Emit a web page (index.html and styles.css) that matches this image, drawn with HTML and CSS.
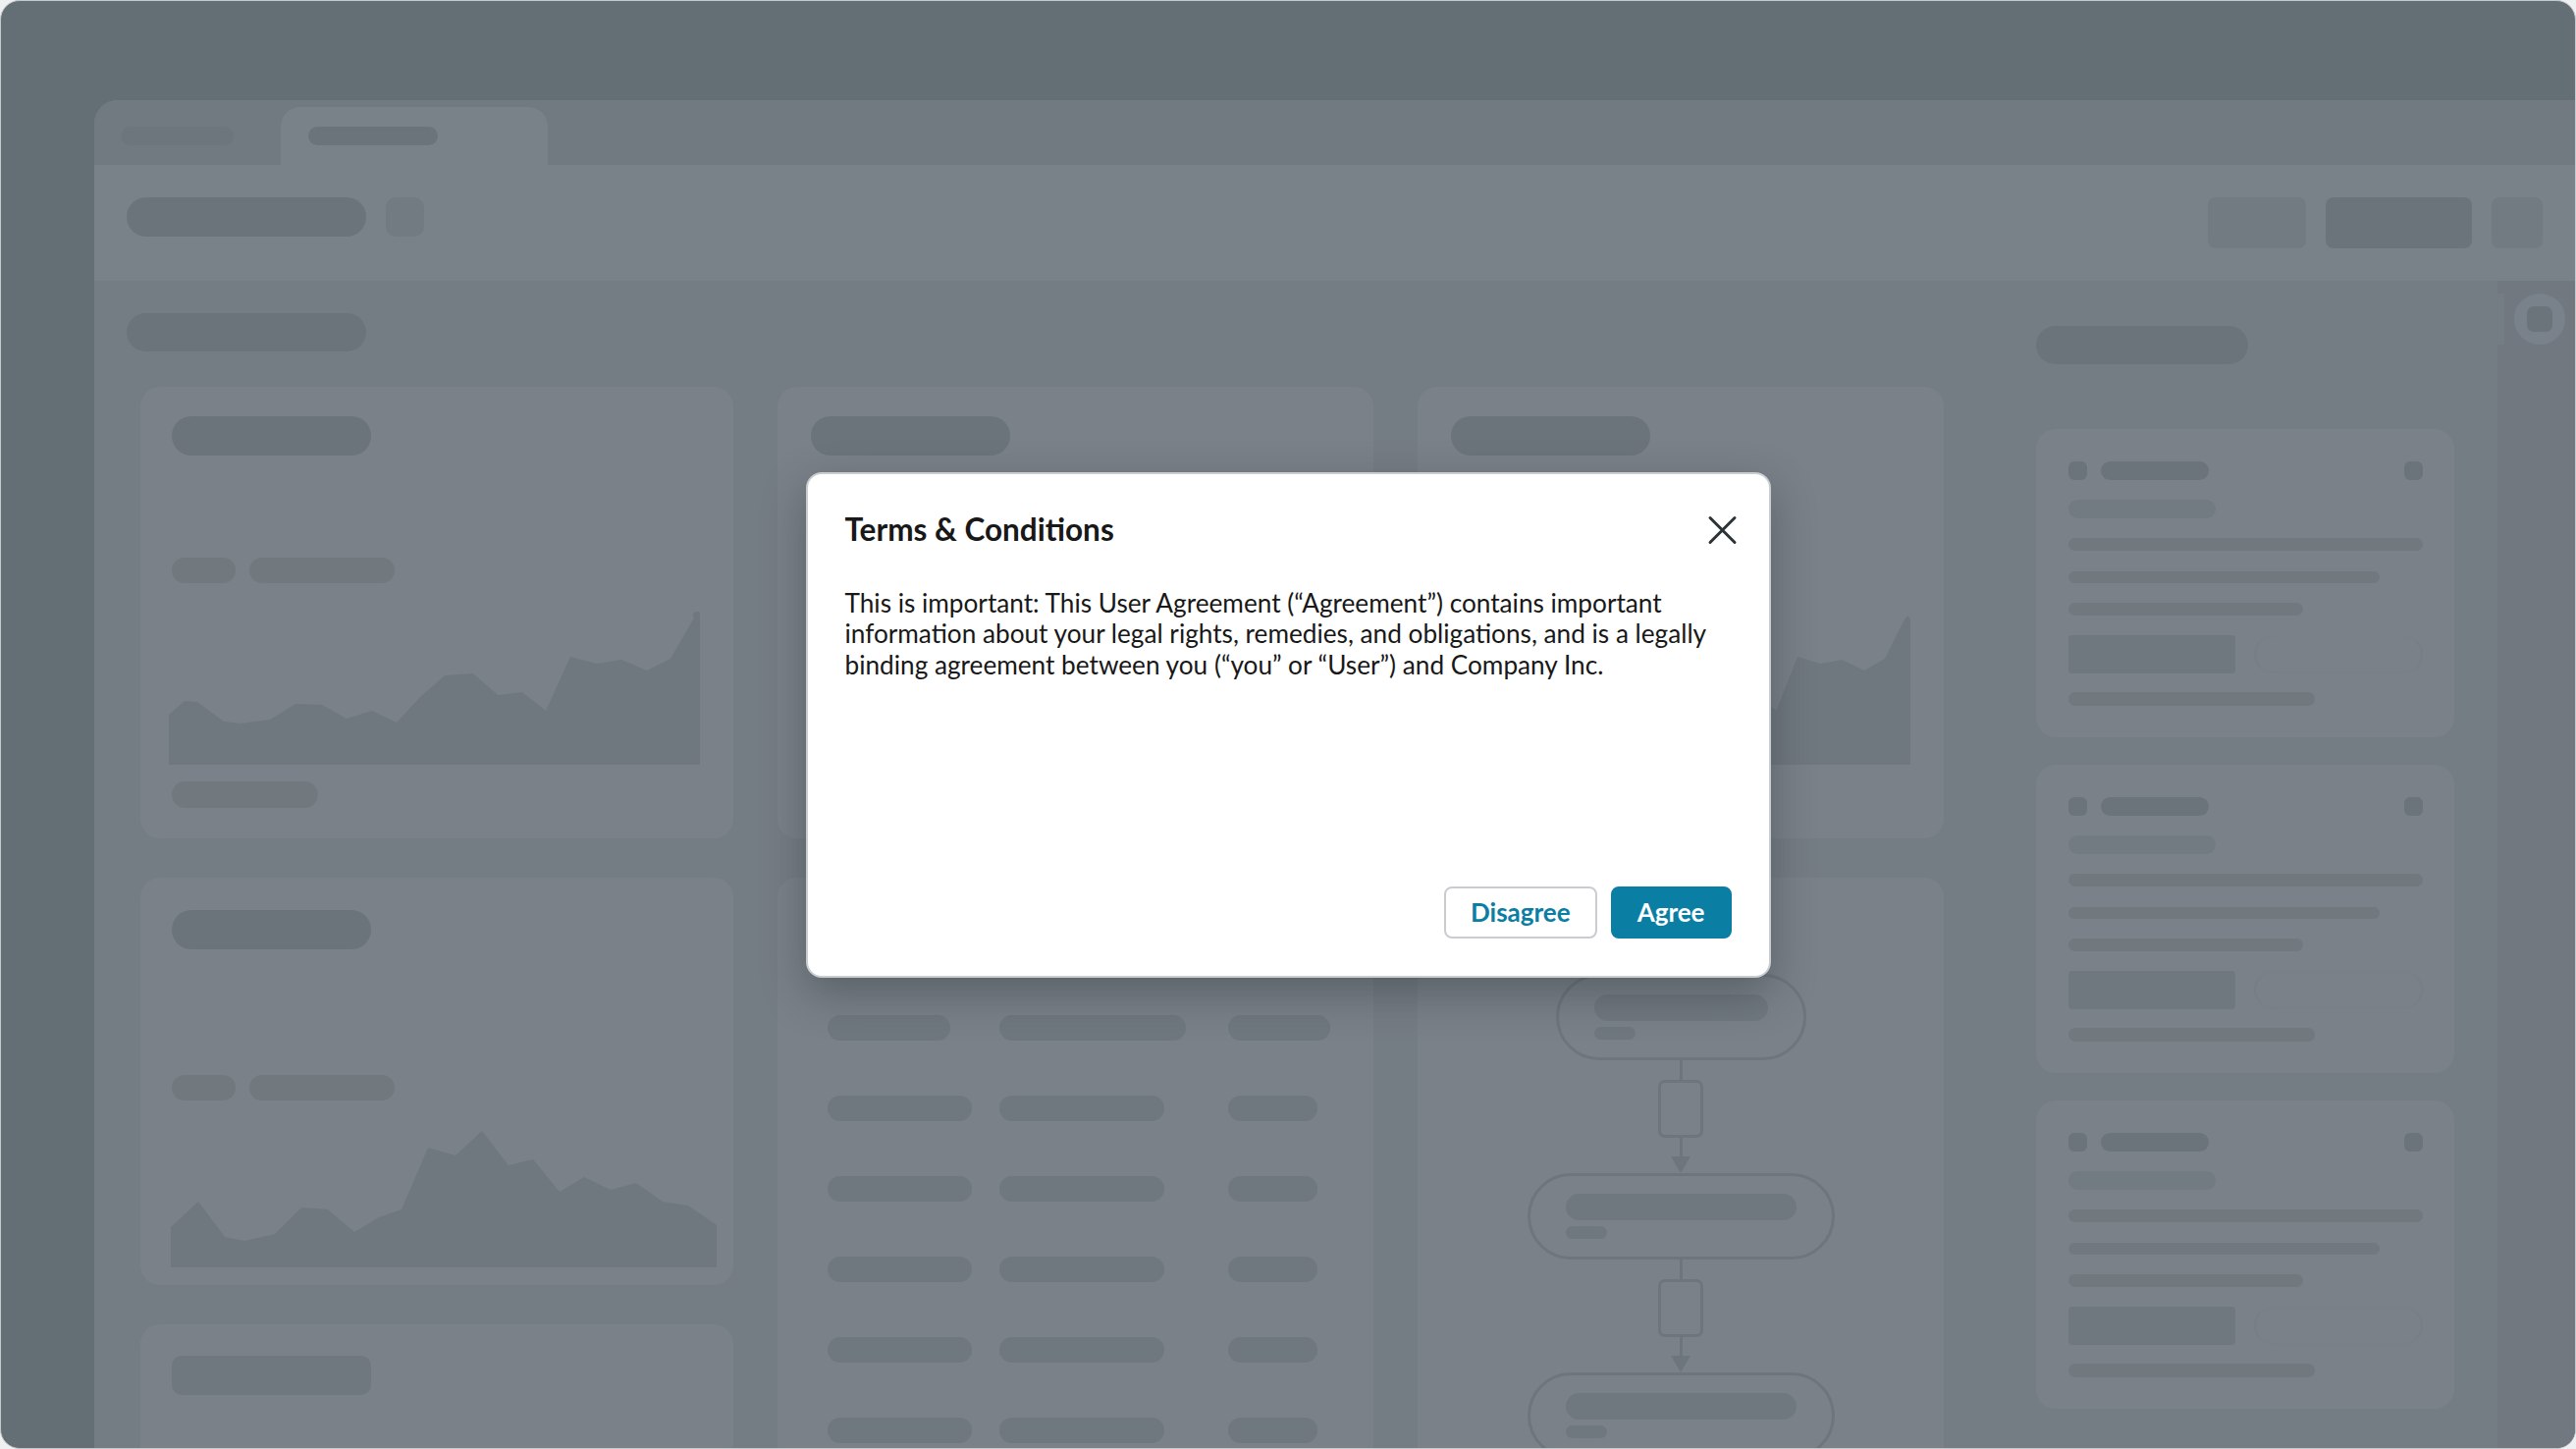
FILE: index.html
```html
<!DOCTYPE html>
<html lang="en">
<head>
    <meta charset="UTF-8">
    <meta name="viewport" content="width=device-width, initial-scale=1.0">
    <title>Terms &amp; Conditions</title>
    <link rel="stylesheet" href="styles.css">
</head>
<body>
<div class="frame">
    <div class="app">
        <div class="tabbar">
            <div class="tab tab-first"><span class="sk"></span></div>
            <div class="tab tab-active"><span class="sk"></span></div>
        </div>

        <div class="header">
            <div class="header-left">
                <span class="sk head-title"></span>
                <span class="sk head-icon"></span>
            </div>
            <div class="header-right">
                <span class="sk hbtn hbtn-a"></span>
                <span class="sk hbtn hbtn-b"></span>
                <span class="sk hbtn hbtn-c"></span>
            </div>
        </div>

        <div class="workspace">
            <div class="main">
                <div class="left">
                    <span class="sk section-title"></span>
                    <div class="grid">
                        <!-- column 1 -->
                        <div class="col">
                            <div class="card chart-card">
                                <span class="sk card-title"></span>
                                <div class="pill-row">
                                    <span class="sk pill-s"></span>
                                    <span class="sk pill-m"></span>
                                </div>
                                <svg class="chart" viewBox="0 0 541 156" preserveAspectRatio="none">
                                    <polygon points="0,105 16,91 29,92 56,112 73,114 103,110 129,94 156,95 181,109 207,101 232,113 255,88 281,65 310,63 335,85 360,82 384,101 409,46 436,53 461,49 487,60 511,48 534,8 538,4 541,8 541,156 0,156"/>
                                    <circle cx="538" cy="4" r="4"/>
                                </svg>
                                <span class="sk pill-foot"></span>
                            </div>
                            <div class="card chart-card-b">
                                <span class="sk card-title"></span>
                                <div class="pill-row pill-row-b">
                                    <span class="sk pill-s"></span>
                                    <span class="sk pill-m"></span>
                                </div>
                                <svg class="chart chart-b" viewBox="0 0 556 150" preserveAspectRatio="none">
                                    <polygon points="0,109 28,83 55,119 75,123 106,116 133,89 160,91 187,114 212,99 235,91 262,28 290,36 317,11 344,46 369,40 396,73 421,58 448,71 474,64 501,83 527,87 556,107 556,150 0,150"/>
                                </svg>
                            </div>
                            <div class="card card-tall">
                                <span class="sk card-title card-title-sq"></span>
                            </div>
                        </div>

                        <!-- column 2 -->
                        <div class="col">
                            <div class="card chart-card">
                                <span class="sk card-title"></span>
                                <div class="pill-row">
                                    <span class="sk pill-s"></span>
                                    <span class="sk pill-m"></span>
                                </div>
                                <svg class="chart" viewBox="0 0 541 156" preserveAspectRatio="none">
                                    <polygon points="0,105 16,91 29,92 56,112 73,114 103,110 129,94 156,95 181,109 207,101 232,113 255,88 281,65 310,63 335,85 360,82 384,101 409,46 436,53 461,49 487,60 511,48 534,8 538,4 541,8 541,156 0,156"/>
                                </svg>
                                <span class="sk pill-foot"></span>
                            </div>
                            <div class="card card-tall table-card">
                                <div class="table">
                                    <span class="sk c1"></span><span class="sk c2"></span><span class="sk c3"></span>
                                    <span class="sk c1 w-a"></span><span class="sk c2 w-a"></span><span class="sk c3 w-a"></span>
                                    <span class="sk c1"></span><span class="sk c2"></span><span class="sk c3"></span>
                                    <span class="sk c1"></span><span class="sk c2"></span><span class="sk c3"></span>
                                    <span class="sk c1"></span><span class="sk c2"></span><span class="sk c3"></span>
                                    <span class="sk c1"></span><span class="sk c2"></span><span class="sk c3"></span>
                                    <span class="sk c1"></span><span class="sk c2"></span><span class="sk c3"></span>
                                </div>
                            </div>
                        </div>

                        <!-- column 3 -->
                        <div class="col">
                            <div class="card chart-card">
                                <span class="sk card-title"></span>
                                <div class="pill-row">
                                    <span class="sk pill-s"></span>
                                    <span class="sk pill-m"></span>
                                </div>
                                <svg class="chart" viewBox="0 0 541 156" preserveAspectRatio="none">
                                    <polygon points="0,105 16,91 29,92 56,112 73,114 103,110 129,94 156,95 181,109 207,101 232,113 255,88 281,65 310,63 335,85 360,82 384,101 409,46 436,53 461,49 487,60 511,48 534,8 538,4 541,8 541,156 0,156"/>
                                </svg>
                                <span class="sk pill-foot"></span>
                            </div>
                            <div class="card card-tall flow-card">
                                <div class="node node-sm">
                                    <span class="sk node-line"></span>
                                    <span class="sk node-tag"></span>
                                </div>
                                <span class="link"></span>
                                <span class="step"></span>
                                <span class="link link-short"></span>
                                <span class="arrow"></span>
                                <div class="node">
                                    <span class="sk node-line"></span>
                                    <span class="sk node-tag"></span>
                                </div>
                                <span class="link"></span>
                                <span class="step"></span>
                                <span class="link link-short"></span>
                                <span class="arrow"></span>
                                <div class="node">
                                    <span class="sk node-line"></span>
                                    <span class="sk node-tag"></span>
                                </div>
                            </div>
                        </div>
                    </div>
                </div>

                <div class="side">
                    <span class="sk side-title"></span>
                    <div class="side-list">
                        <div class="card side-card">
                            <div class="side-top"><span class="sk dot"></span><span class="sk side-name"></span><span class="sk dot dot-end"></span></div>
                            <span class="sk sl sl-1"></span>
                            <span class="sk sl sl-2"></span>
                            <span class="sk sl sl-3"></span>
                            <span class="sk sl sl-4"></span>
                            <div class="side-actions"><span class="sk block"></span><span class="ghost"></span></div>
                            <span class="sk sl sl-5"></span>
                        </div>
                        <div class="card side-card">
                            <div class="side-top"><span class="sk dot"></span><span class="sk side-name"></span><span class="sk dot dot-end"></span></div>
                            <span class="sk sl sl-1"></span>
                            <span class="sk sl sl-2"></span>
                            <span class="sk sl sl-3"></span>
                            <span class="sk sl sl-4"></span>
                            <div class="side-actions"><span class="sk block"></span><span class="ghost"></span></div>
                            <span class="sk sl sl-5"></span>
                        </div>
                        <div class="card side-card">
                            <div class="side-top"><span class="sk dot"></span><span class="sk side-name"></span><span class="sk dot dot-end"></span></div>
                            <span class="sk sl sl-1"></span>
                            <span class="sk sl sl-2"></span>
                            <span class="sk sl sl-3"></span>
                            <span class="sk sl sl-4"></span>
                            <div class="side-actions"><span class="sk block"></span><span class="ghost"></span></div>
                            <span class="sk sl sl-5"></span>
                        </div>
                    </div>
                </div>
            </div>

            <div class="utility">
                <span class="util-bar"></span>
                <span class="util-ring"><span class="util-core"></span></span>
            </div>
        </div>
    </div>

    <div class="scrim">
        <div class="modal" role="dialog" aria-labelledby="modalTitle">
            <div class="modal-head">
                <h2 id="modalTitle">Terms &amp; Conditions</h2>
                <button class="close" aria-label="Close">
                    <svg width="32" height="32" viewBox="0 0 32 32">
                        <path d="M3 4.5 L28 29.5 M28 4.5 L3 29.5" stroke="#2b3337" stroke-width="3" stroke-linecap="round" fill="none"/>
                    </svg>
                </button>
            </div>
            <p class="modal-text">This is important: This User Agreement (“Agreement”) contains important information about your legal rights, remedies, and obligations, and is a legally binding agreement between you (“you” or “User”) and Company Inc.</p>
            <div class="modal-foot">
                <button class="btn btn-neutral">Disagree</button>
                <button class="btn btn-brand">Agree</button>
            </div>
        </div>
    </div>
</div>
</body>
</html>
```

FILE: styles.css
```css
* {
    box-sizing: border-box;
}

html, body {
    margin: 0;
    height: 100%;
}

body {
    background: #eef0f1;
    overflow: hidden;
    font-family: Lato, "Open Sans", sans-serif;
}

.frame {
    position: relative;
    height: 100vh;
    padding: 101px 0 0 95px;
    background: #646f75;
    border: 1px solid #c4c9cc;
    border-radius: 20px;
    overflow: hidden;
}

.app {
    height: 100%;
    display: flex;
    flex-direction: column;
    background: #757d84;
    border-top-left-radius: 24px;
    overflow: hidden;
}

/* skeleton pieces */
.sk {
    display: block;
    flex-shrink: 0;
    background: #6c747b;
    border-radius: 999px;
}

/* tabs */
.tabbar {
    height: 66px;
    flex-shrink: 0;
    display: flex;
    align-items: flex-end;
    background: #717a81;
}
.tab {
    height: 59px;
    display: flex;
    align-items: center;
}
.tab-first {
    width: 190px;
    padding-left: 27px;
}
.tab-first .sk {
    width: 115px;
    height: 19px;
    background: #6d767c;
}
.tab-active {
    width: 272px;
    padding-left: 28px;
    background: #7a8289;
    border-radius: 20px 20px 0 0;
}
.tab-active .sk {
    width: 132px;
    height: 19px;
}

/* header */
.header {
    height: 118px;
    flex-shrink: 0;
    display: flex;
    justify-content: space-between;
    padding: 33px 33px 0;
    background: #7a8289;
}
.header-left, .header-right {
    display: flex;
    align-items: flex-start;
}
.head-title {
    width: 244px;
    height: 40px;
}
.head-icon {
    width: 39px;
    height: 40px;
    margin-left: 20px;
    border-radius: 10px;
    background: #737b82;
}
.hbtn {
    height: 52px;
    border-radius: 8px;
    margin-left: 20px;
    background: #737b82;
}
.hbtn-a { width: 100px; }
.hbtn-b { width: 149px; background: #6c747b; }
.hbtn-c { width: 52px; }

/* body */
.workspace {
    flex: 1;
    display: flex;
    min-height: 0;
}
.main {
    flex: 1;
    display: flex;
    min-width: 0;
}
.left {
    padding: 33px 0 0 33px;
}
.section-title {
    width: 244px;
    height: 39px;
}
.grid {
    display: grid;
    grid-template-columns: 604px 607px 536px;
    column-gap: 45px;
    align-items: start;
    margin: 36px 0 0 14px;
}
.col {
    display: flex;
    flex-direction: column;
    gap: 40px;
}

.card {
    background: #7a8188;
    border-radius: 20px;
}

/* chart cards */
.chart-card {
    height: 460px;
    padding: 30px 34px 0 32px;
    display: flex;
    flex-direction: column;
}
.col + .col .chart-card {
    padding-left: 34px;
}
.card-title {
    width: 203px;
    height: 40px;
}
.card-title-sq {
    border-radius: 10px;
    background: #70787f;
}
.pill-row {
    display: flex;
    gap: 14px;
    margin-top: 104px;
}
.pill-s, .pill-m {
    height: 26px;
    background: #71797f;
}
.pill-s { width: 65px; }
.pill-m { width: 148px; }
.chart {
    display: block;
    width: calc(100% + 3px);
    height: 156px;
    margin: 29px 0 0 -3px;
    fill: #70787f;
}
.pill-foot {
    width: 149px;
    height: 27px;
    margin-top: 17px;
    background: #71797f;
}

.chart-card-b {
    height: 415px;
    padding: 33px 0 0 32px;
}
.pill-row-b {
    margin-top: 128px;
}
.chart-b {
    width: 556px;
    height: 150px;
    margin: 20px 0 0 -1px;
}

.card-tall {
    height: 620px;
    padding: 32px;
}

/* table */
.table-card {
    padding: 58px 0 0 51px;
}
.table {
    display: grid;
    grid-template-columns: 175px 233px auto;
    row-gap: 56px;
}
.table .sk {
    height: 26px;
    background: #70787f;
}
.c1 { width: 147px; }
.c2 { width: 168px; }
.c3 { width: 91px; }
.c1.w-a { width: 125px; }
.c2.w-a { width: 190px; }
.c3.w-a { width: 104px; }

/* flow */
.flow-card {
    padding: 98px 0 0;
    display: flex;
    flex-direction: column;
    align-items: center;
}
.node {
    width: 313px;
    height: 88px;
    flex-shrink: 0;
    padding: 18px 36px 0;
    border: 3px solid #6e767d;
    border-radius: 44px;
}
.node-sm {
    width: 255px;
}
.node-line {
    height: 27px;
    background: #70787f;
}
.node-tag {
    width: 42px;
    height: 13px;
    margin-top: 6px;
    background: #70787f;
}
.link {
    width: 3px;
    height: 20px;
    flex-shrink: 0;
    background: #6e767d;
}
.link-short {
    height: 19px;
}
.step {
    width: 46px;
    height: 59px;
    flex-shrink: 0;
    border: 3px solid #6e767d;
    border-radius: 7px;
}
.arrow {
    width: 0;
    height: 0;
    flex-shrink: 0;
    border-left: 10px solid transparent;
    border-right: 10px solid transparent;
    border-top: 17px solid #6e767d;
}

/* side panel */
.side {
    width: 426px;
    margin-left: 94px;
    padding-top: 46px;
}
.side-title {
    width: 216px;
    height: 39px;
}
.side-list {
    display: flex;
    flex-direction: column;
    gap: 28px;
    margin-top: 66px;
}
.side-card {
    height: 314px;
    padding: 33px 32px 0 33px;
}
.side-top {
    display: flex;
}
.dot {
    width: 19px;
    height: 19px;
    border-radius: 6px;
}
.side-name {
    width: 110px;
    height: 19px;
    margin-left: 14px;
}
.dot-end {
    margin-left: auto;
}
.sl {
    height: 13px;
    margin-top: 20px;
    background: #71797f;
}
.sl-1 { width: 150px; height: 19px; background: #737b82; }
.sl-2 { width: 361px; }
.sl-3 { width: 317px; height: 12px; margin-top: 21px; }
.sl-4 { width: 239px; }
.sl-5 { width: 251px; height: 14px; margin-top: 19px; }
.side-actions {
    display: flex;
    gap: 19px;
    margin-top: 20px;
}
.block {
    width: 170px;
    height: 39px;
    border-radius: 4px;
    background: #70787f;
}
.ghost {
    width: 172px;
    height: 39px;
    border: 2px solid #777f86;
    border-top-color: #798087;
    border-bottom-color: #798087;
    border-radius: 20px;
}

/* utility strip */
.utility {
    width: 79px;
    flex-shrink: 0;
    display: flex;
    align-items: flex-start;
    padding-top: 13px;
    background: #71787f;
}
.util-bar {
    width: 7px;
    height: 52px;
    background: #757d84;
}
.util-ring {
    width: 52px;
    height: 52px;
    margin-left: 10px;
    display: flex;
    align-items: center;
    justify-content: center;
    border: 13px solid #79818a;
    border-radius: 50%;
}
.util-core {
    width: 26px;
    height: 26px;
    flex-shrink: 0;
    border-radius: 7px;
    background: #6c747b;
}

/* modal */
.scrim {
    position: absolute;
    inset: 0;
    display: flex;
    align-items: center;
    justify-content: center;
}
.modal {
    width: 983px;
    height: 515px;
    display: flex;
    flex-direction: column;
    padding: 38px;
    background: #fff;
    border: 2px solid #c9cdd0;
    border-radius: 16px;
    box-shadow: 0 16px 44px rgba(30, 36, 40, 0.35);
    color: #181818;
}
.modal-head {
    display: flex;
    justify-content: space-between;
    align-items: flex-start;
}
.modal-head h2 {
    margin: 0;
    font-size: 31.5px;
    line-height: 36px;
    font-weight: 700;
}
.close {
    margin: 2px -7px 0 0;
    padding: 0;
    border: none;
    background: none;
    line-height: 0;
    cursor: pointer;
}
.modal-text {
    margin: 42px 0 0;
    font-size: 26.2px;
    line-height: 31.5px;
}
.modal-foot {
    margin-top: auto;
    display: flex;
    justify-content: flex-end;
    gap: 14px;
}
.btn {
    height: 53px;
    padding: 0 25px;
    border-radius: 8px;
    font-family: Lato, "Open Sans", sans-serif;
    font-size: 26px;
    font-weight: 700;
    cursor: pointer;
}
.btn-neutral {
    background: #fff;
    border: 2px solid #c9cdd0;
    color: #0b7ea3;
}
.btn-brand {
    background: #0b7ea3;
    border: 2px solid #0b7ea3;
    color: #fff;
}
```
